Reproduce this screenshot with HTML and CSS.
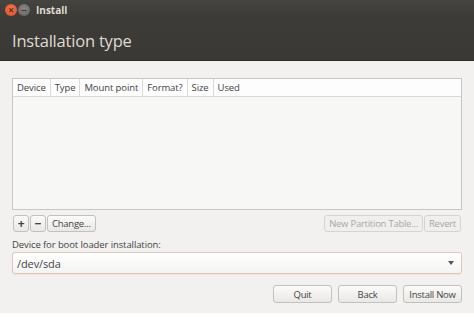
FILE: index.html
```html
<!DOCTYPE html>
<html lang="en">
<head>
    <meta charset="UTF-8">
    <title>Install</title>
    <link rel="stylesheet" href="styles.css">
</head>
<body>
    <div id="window">
        <div class="header">
            <div class="titlebar">
                <span class="dot close">&times;</span>
                <span class="dot mini">&minus;</span>
                <span class="wintitle">Install</span>
            </div>
            <h1>Installation type</h1>
        </div>
        <div class="content">
            <div class="tree">
                <div class="tree-head">
                    <span>Device</span>
                    <span>Type</span>
                    <span>Mount point</span>
                    <span>Format?</span>
                    <span>Size</span>
                    <span>Used</span>
                </div>
            </div>
            <div class="toolrow">
                <div class="group">
                    <button class="btn sq">+</button>
                    <button class="btn sq">&minus;</button>
                    <button class="btn">Change...</button>
                </div>
                <div class="group">
                    <button class="btn off">New Partition Table...</button>
                    <button class="btn off">Revert</button>
                </div>
            </div>
            <div class="label">Device for boot loader installation:</div>
            <div class="combo">
                <span>/dev/sda</span>
                <span class="arrow"></span>
            </div>
            <div class="actions">
                <button class="btn big">Quit</button>
                <button class="btn big">Back</button>
                <button class="btn big">Install Now</button>
            </div>
        </div>
    </div>
</body>
</html>
```

FILE: styles.css
```css
body, html {
    margin: 0;
    height: 100%;
    background: #ffffff;
    font-family: "Open Sans", "DejaVu Sans", sans-serif;
}

#window {
    width: 474px;
    height: 313px;
    background: #f2f1f0;
    display: flex;
    flex-direction: column;
}

.header {
    height: 61px;
    background: linear-gradient(#45443f, #3c3b37 30%, #3a3935);
    border-bottom: 1px solid #2d2c29;
    box-sizing: border-box;
}

.titlebar {
    display: flex;
    align-items: center;
    height: 19px;
    padding-left: 5px;
}

.dot {
    width: 12px;
    height: 12px;
    border-radius: 50%;
    font-size: 10px;
    line-height: 12px;
    text-align: center;
    margin-right: 1px;
    font-weight: bold;
}
.close {
    background: radial-gradient(circle at 50% 40%, #f07a52, #d74a22);
    color: #6b2410;
}
.mini {
    background: radial-gradient(circle at 50% 40%, #8a8984, #5f5e5a);
    color: #3c3b37;
}

.wintitle {
    color: #dfdbd2;
    font-size: 10px;
    font-weight: bold;
    margin-left: 5px;
}

h1 {
    margin: 10px 0 0 12px;
    font-size: 16.5px;
    font-weight: normal;
    color: #dfdbd2;
    letter-spacing: -0.2px;
}

.content {
    padding: 17px 12px 0 12px;
    display: flex;
    flex-direction: column;
    letter-spacing: -0.1px;
}

.tree {
    height: 132px;
    background: #f7f7f6;
    border: 1px solid #c8c6c2;
    box-sizing: border-box;
}

.tree-head {
    display: flex;
    height: 17px;
    background: #fdfdfd;
    border-bottom: 1px solid #dcdad6;
    font-size: 9.5px;
    color: #444;
}
.tree-head span {
    padding: 0 4px;
    line-height: 17px;
    border-right: 1px solid #dcdad6;
}
.tree-head span:last-child {
    border-right: none;
}

.toolrow {
    display: flex;
    justify-content: space-between;
    margin-top: 5px;
    padding: 0 1px;
}
.group {
    display: flex;
    gap: 1px;
}

.btn {
    font-family: inherit;
    font-size: 9.5px;
    letter-spacing: -0.25px;
    color: #444;
    height: 17px;
    padding: 0 4px;
    background: linear-gradient(#fbfbfa, #e9e8e6);
    border: 1px solid #c3c1bd;
    border-radius: 3px;
    margin: 0;
}
.btn.sq {
    width: 16px;
    padding: 0;
    font-size: 12px;
    font-weight: bold;
    line-height: 14px;
}
.btn.off {
    color: #a8a7a4;
    background: #f0efee;
    border-color: #d6d4d0;
}

.label {
    font-size: 9.5px;
    color: #444;
    margin-top: 6px;
}

.combo {
    margin-top: 1px;
    height: 20px;
    border: 1px solid #e2c6bd;
    border-radius: 3px;
    background: linear-gradient(#ffffff, #f4f4f3);
    display: flex;
    align-items: center;
    justify-content: space-between;
    padding: 0 7px 0 4px;
    font-size: 11px;
    color: #444;
    box-shadow: 0 1px 0 #efe3de;
}
.arrow {
    width: 0;
    height: 0;
    border-left: 3px solid transparent;
    border-right: 3px solid transparent;
    border-top: 4px solid #555;
}

.actions {
    display: flex;
    justify-content: flex-end;
    gap: 6px;
    margin-top: 11px;
}
.btn.big {
    width: 59px;
    height: 18px;
    padding: 0;
    font-size: 9.5px;
}
```
